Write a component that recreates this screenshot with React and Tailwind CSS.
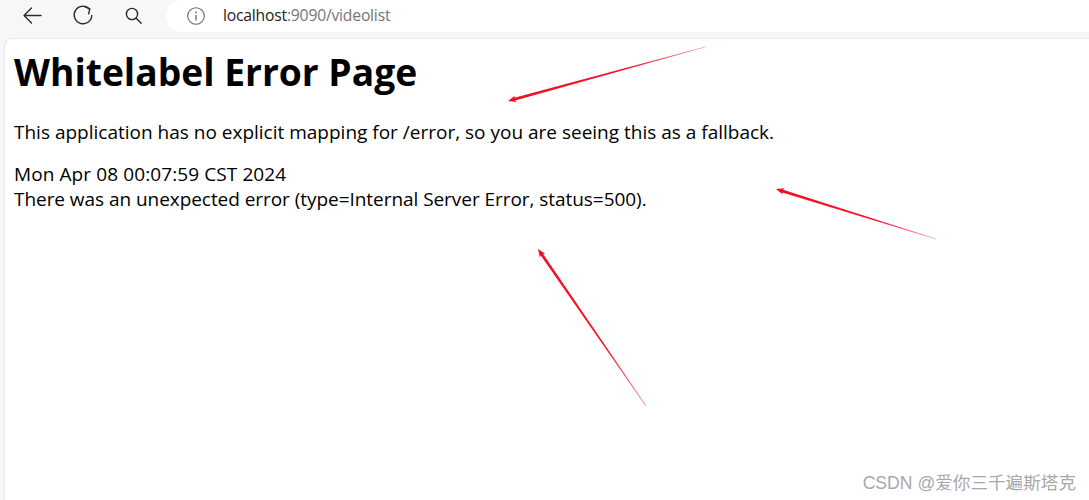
const font = { fontFamily: '"Open Sans","Noto Sans",sans-serif' };

function Arrow({ tip, tail }) {
  const dx = tail[0] - tip[0], dy = tail[1] - tip[1];
  const len = Math.hypot(dx, dy);
  const ux = dx / len, uy = dy / len, nx = -uy, ny = ux;
  const p = (a, b) => `${tip[0] + ux * a + nx * b},${tip[1] + uy * a + ny * b}`;
  const id = `g${tip[0]}`;
  return (
    <>
      <defs>
        <linearGradient id={id} gradientUnits="userSpaceOnUse" x1={tip[0]} y1={tip[1]} x2={tail[0]} y2={tail[1]}>
          <stop offset="0" stopColor="#f0101f" />
          <stop offset="0.6" stopColor="#f51528" />
          <stop offset="1" stopColor="#fa8a94" />
        </linearGradient>
      </defs>
      <polygon
        fill={`url(#${id})`}
        points={[p(0, 0), p(8, 3.2), p(7, 1.4), p(len, 0.35), p(len, -0.35), p(7, -1.4), p(8, -3.2)].join(" ")}
      />
    </>
  );
}

export default function App() {
  return (
    <div className="relative w-[1089px] h-[500px] overflow-hidden bg-[#f7f7f7] flex flex-col" style={font}>
      <div className="h-[38px] flex items-start shrink-0">
        <div className="w-[166px] h-[32px] relative text-[#222]">
          <svg width="166" height="32" viewBox="0 0 166 32" fill="none" stroke="#2b2b2b" strokeWidth="1.4" strokeLinecap="round" strokeLinejoin="round">
            <path d="M24 15.5h17M24 15.5l7.5-7.5M24 15.5l7.5 7.5" />
            <path d="M89.5 9a8.8 8.8 0 1 0 2.3 6.5" />
            <path d="M84.5 6.5l5.3 2.4-1.2 5" />
            <circle cx="132" cy="14" r="5.6" />
            <path d="M136.2 18.2l5 5" />
          </svg>
        </div>
        <div className="flex-1 h-[32px] bg-white rounded-l-[16px] flex items-center pl-[21px]">
          <svg width="18" height="18" viewBox="0 0 18 18" fill="none" stroke="#666" strokeWidth="1.1">
            <circle cx="9" cy="9" r="8.3" />
            <path d="M9 8v5.5" strokeWidth="1.3" />
            <path d="M9 4.6v1.6" strokeWidth="1.5" />
          </svg>
          <span className="ml-[18px] text-[15.7px] text-[#222] tracking-[-0.2px]">
            localhost<span className="text-[#757575]">:9090/videolist</span>
          </span>
        </div>
      </div>
      <div className="flex-1 ml-[4px] bg-white rounded-tl-[8px] border-l border-t border-[#e9e9e9] pl-[9px] text-black">
        <h1 className="text-[37.2px] leading-[50px] font-bold mt-[8px]">Whitelabel Error Page</h1>
        <p className="text-[19px] leading-[24px] mt-[23px]">This application has no explicit mapping for /error, so you are seeing this as a fallback.</p>
        <p className="text-[19px] leading-[24.5px] mt-[18px] tracking-[0.1px]">Mon Apr 08 00:07:59 CST 2024</p>
        <p className="text-[19px] leading-[24px] tracking-[-0.05px]">There was an unexpected error (type=Internal Server Error, status=500).</p>
      </div>
      <svg className="absolute inset-0 pointer-events-none" width="1089" height="500">
        <Arrow tip={[508, 101]} tail={[705, 47]} />
        <Arrow tip={[776, 189]} tail={[936, 239]} />
        <Arrow tip={[538, 249]} tail={[646, 406]} />
      </svg>
      <div
        className="absolute right-[13px] top-[471px] text-[17.6px] leading-[24px] text-[#a8a8a8]"
        style={{ fontFamily: '"Liberation Sans","Noto Sans CJK SC",sans-serif' }}
      >
        CSDN @爱你三千遍斯塔克
      </div>
    </div>
  );
}
